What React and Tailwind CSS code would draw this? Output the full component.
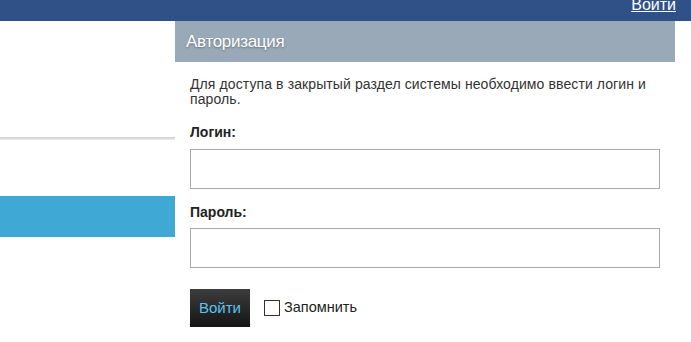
export default function App() {
  return (
    <div className="min-h-screen bg-white font-['Liberation_Sans',Arial,sans-serif] text-[#333]">
      {/* Top bar */}
      <div className="h-[21px] bg-[#2f5187] flex justify-end items-end overflow-hidden pr-[15px]">
        <a href="#" className="text-white text-[16px] leading-[16px] underline mb-[8px]">
          Войти
        </a>
      </div>

      <div className="flex">
        {/* Sidebar */}
        <div className="w-[175px] shrink-0">
          <div className="h-[116px]" />
          <div className="h-[3px] bg-gradient-to-b from-[#cfcfcf] to-[#ececec]" />
          <div className="h-[56px]" />
          <div className="h-[41px] bg-[#3fa8d4]" />
        </div>

        {/* Auth panel */}
        <div className="w-[500px] shrink-0">
          <div className="h-[41px] bg-[#99a9b8] flex items-center pl-[11px]">
            <h2 className="text-white text-[17px] tracking-[-0.3px] [text-shadow:0_1px_2px_rgba(0,0,0,0.35)]">
              Авторизация
            </h2>
          </div>
          <div className="px-[15px] pt-[15px]">
            <p className="text-[14px] leading-[15px] tracking-[0.1px] text-[#333] pr-[10px]">
              Для доступа в закрытый раздел системы необходимо ввести логин и пароль.
            </p>
            <label className="block mt-[17px] text-[14px] font-bold text-[#222] leading-[16px]">
              Логин:
            </label>
            <input type="text" className="block mt-[9px] w-[470px] h-[40px] border border-[#aaa] outline-none" />
            <label className="block mt-[15px] text-[14px] font-bold text-[#222] leading-[16px]">
              Пароль:
            </label>
            <input type="password" className="block mt-[8px] w-[470px] h-[40px] border border-[#aaa] outline-none" />
            <div className="flex items-center mt-[21px]">
              <button className="w-[60px] h-[38px] bg-gradient-to-b from-[#3d3d3d] to-[#151515] text-[#5cc4ef] text-[15px]">
                Войти
              </button>
              <label className="flex items-center ml-[14px] text-[14.5px] text-[#222]">
                <span className="w-[16px] h-[16px] border border-[#333] bg-white mr-[4px]" />
                Запомнить
              </label>
            </div>
          </div>
        </div>
      </div>
    </div>
  );
}
